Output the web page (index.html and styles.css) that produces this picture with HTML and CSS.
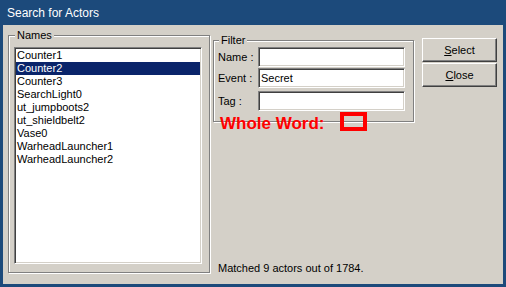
FILE: index.html
```html
<!DOCTYPE html>
<html lang="en">
<head>
  <meta charset="UTF-8">
  <title>Search for Actors</title>
  <link rel="stylesheet" href="styles.css">
</head>
<body>

  <div class="window">
    <div class="titlebar">Search for Actors</div>
    <div class="dialog">

      <div class="group names">
        <span class="caption">Names</span>
        <ul class="listbox">
          <li>Counter1</li>
          <li class="selected">Counter2</li>
          <li>Counter3</li>
          <li>SearchLight0</li>
          <li>ut_jumpboots2</li>
          <li>ut_shieldbelt2</li>
          <li>Vase0</li>
          <li>WarheadLauncher1</li>
          <li>WarheadLauncher2</li>
        </ul>
      </div>

      <div class="middle">
        <div class="group filter">
          <span class="caption">Filter</span>
          <div class="field">
            <label class="field-label">Name :</label>
            <input type="text" class="textbox">
          </div>
          <div class="field">
            <label class="field-label">Event :</label>
            <input type="text" class="textbox" value="Secret">
          </div>
          <div class="field field-tag">
            <label class="field-label">Tag :</label>
            <input type="text" class="textbox">
          </div>
        </div>

        <div class="annotation">
          <span class="annotation-text">Whole Word:</span>
          <span class="annotation-box"></span>
        </div>

        <p class="status">Matched 9 actors out of 1784.</p>
      </div>

      <div class="buttons">
        <button class="button"><u>S</u>elect</button>
        <button class="button"><u>C</u>lose</button>
      </div>

    </div>
  </div>

</body>
</html>
```

FILE: styles.css
```css
* {
  box-sizing: border-box;
}
body {
  margin: 0;
  font-family: 'Liberation Sans', Arial, sans-serif;
  font-size: 11px;
  color: #000;
}
.window {
  width: 506px;
  height: 287px;
  display: flex;
  flex-direction: column;
  background: #d4d0c8;
  border: 3px solid #1c4a7b;
  border-top: 0;
}
.titlebar {
  height: 25px;
  padding: 1px 0 0 4px;
  line-height: 24px;
  font-size: 12px;
  color: #fff;
  background: #1c4a7b;
}
.dialog {
  flex: 1;
  display: flex;
  align-items: flex-start;
}

/* etched group box */
.group {
  position: relative;
  border: 1px solid #808080;
  box-shadow: inset 1px 1px #fff, 1px 1px #fff;
}
.caption {
  position: absolute;
  top: -7px;
  padding: 0 2px;
  line-height: 13px;
  background: #d4d0c8;
}
.names {
  width: 202px;
  margin: 10px 0 0 5px;
  padding: 11px 7px 8px 5px;
}
.names .caption {
  left: 6px;
}
.listbox {
  width: 188px;
  height: 217px;
  margin: 0;
  padding: 0;
  list-style: none;
  background: #fff;
  border: 1px solid;
  border-color: #808080 #fff #fff #808080;
  box-shadow: inset 1px 1px #404040, inset -1px -1px #d4d0c8;
}
.listbox li {
  height: 13px;
  line-height: 13px;
  padding-left: 1px;
  margin: 0 1px;
}
.listbox li:first-child {
  margin-top: 1px;
}
.listbox .selected {
  background: #0a246a;
  color: #fff;
}

.middle {
  position: relative;
  align-self: stretch;
  display: flex;
  flex-direction: column;
  margin-left: 3px;
}
.filter {
  width: 201px;
  margin-top: 15px;
  padding: 6px 8px 10px 4px;
}
.filter .caption {
  left: 5px;
}
.field {
  display: flex;
  height: 20px;
  line-height: 20px;
}
.field + .field {
  margin-top: 1px;
}
.field-tag.field {
  margin-top: 3px;
}
.field-label {
  width: 40px;
}
.textbox {
  width: 147px;
  height: 20px;
  margin: 0;
  padding: 0 2px;
  font: inherit;
  line-height: 16px;
  background: #fff;
  border: 1px solid;
  border-color: #808080 #fff #fff #808080;
  box-shadow: inset 1px 1px #404040, inset -1px -1px #d4d0c8;
  outline: none;
}

/* red highlight drawn over the dialog */
.annotation {
  position: absolute;
  left: 7px;
  top: 87px;
  width: 147px;
  display: flex;
  justify-content: space-between;
  align-items: flex-start;
}
.annotation-text {
  margin-top: 3px;
  font-size: 17px;
  font-weight: bold;
  line-height: 17px;
  color: #ff0000;
}
.annotation-box {
  width: 27px;
  height: 19px;
  border: 4px solid #ff0000;
}

.status {
  margin: auto 0 9px 5px;
  line-height: 13px;
}

.buttons {
  display: flex;
  flex-direction: column;
  gap: 1px;
  margin: 13px 0 0 8px;
}
.button {
  width: 75px;
  height: 24px;
  padding: 0;
  font: inherit;
  color: #000;
  background: #d4d0c8;
  border: 1px solid;
  border-color: #fff #404040 #404040 #fff;
  box-shadow: inset -1px -1px #808080;
}
```
